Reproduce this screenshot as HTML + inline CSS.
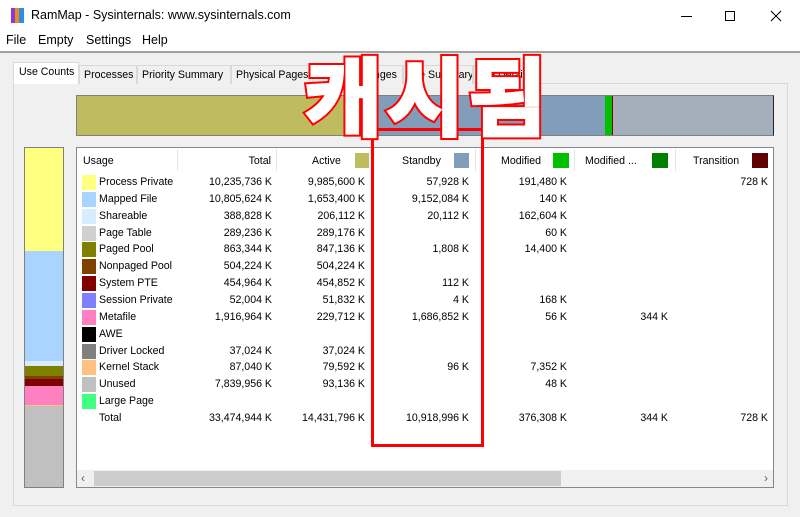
<!DOCTYPE html>
<html><head><meta charset="utf-8"><style>
*{margin:0;padding:0;box-sizing:border-box}
body{width:800px;height:517px;background:#f0f0f0;font-family:"Liberation Sans",Tahoma,sans-serif;font-size:10.6px;color:#000;position:relative;overflow:hidden}
.a{position:absolute}
.r{position:absolute;text-align:right;white-space:nowrap}
.t{position:absolute;white-space:nowrap}
.tab{position:absolute;top:65px;height:19px;border:1px solid #d9d9d9;border-bottom:none;background:#f0f0f0;font-size:10.6px;padding:3px 0 0 4px;color:#000;white-space:nowrap;overflow:hidden}
.sw{position:absolute;left:82px;width:14px;height:15px}
.big{position:absolute;left:304px;top:46px;font-family:'Noto Sans CJK KR','NanumGothic',sans-serif;font-weight:bold;font-size:85px;letter-spacing:4px;line-height:1.1;white-space:nowrap}
</style></head><body>
<div class="a" style="left:0;top:0;width:800px;height:51px;background:#fff"></div>
<div class="a" style="left:0;top:51px;width:800px;height:2px;background:#a0a0a0"></div>
<div class="a" style="left:11px;top:8px;width:4px;height:15px;background:#8a3ad8"></div>
<div class="a" style="left:15px;top:8px;width:4px;height:15px;background:#f08a1c"></div>
<div class="a" style="left:19px;top:8px;width:5px;height:15px;background:#2b8ee6"></div>
<div class="t" style="left:31px;top:8px;font-size:12.5px">RamMap - Sysinternals: www.sysinternals.com</div>
<div class="t" style="left:6px;top:33px;font-size:12.5px">File</div>
<div class="t" style="left:38px;top:33px;font-size:12.5px">Empty</div>
<div class="t" style="left:86px;top:33px;font-size:12.5px">Settings</div>
<div class="t" style="left:142px;top:33px;font-size:12.5px">Help</div>
<div class="a" style="left:681px;top:16px;width:11px;height:1px;background:#000"></div>
<div class="a" style="left:725px;top:11px;width:10px;height:10px;border:1px solid #000"></div>
<svg class="a" style="left:770px;top:10px" width="12" height="12"><path d="M1 1L11 11M11 1L1 11" stroke="#000" stroke-width="1.1"/></svg>

<div class="a" style="left:13px;top:83px;width:775px;height:423px;border:1px solid #d9d9d9;background:#f0f0f0"></div>
<div class="tab" style="left:79px;width:58px">Processes</div>
<div class="tab" style="left:137px;width:94px">Priority Summary</div>
<div class="tab" style="left:231px;width:82px">Physical Pages</div>
<div class="tab" style="left:313px;width:90px">Physical Ranges</div>
<div class="tab" style="left:403px;width:70px">File Summary</div>
<div class="tab" style="left:473px;width:60px">File Details</div>
<div class="tab" style="left:13px;top:62px;height:22px;width:66px;background:#fff;padding-left:5px">Use Counts</div>

<div class="a" style="left:76px;top:95px;width:698px;height:41px;border:1px solid #808080;border-right-color:#222;background:#a5afbb"></div>
<div class="a" style="left:77px;top:96px;width:300px;height:39px;background:#bfbc5f"></div>
<div class="a" style="left:377px;top:96px;width:228px;height:39px;background:#829dba"></div>
<div class="a" style="left:605px;top:96px;width:7px;height:39px;background:#00c000"></div>
<div class="a" style="left:612px;top:96px;width:1px;height:39px;background:#800000"></div>

<div class="a" style="left:24px;top:147px;width:40px;height:341px;border:1px solid #808080;background:#c0c0c0"></div>
<div class="a" style="left:25px;top:148px;width:38px;height:103px;background:#ffff80"></div>
<div class="a" style="left:25px;top:251px;width:38px;height:110px;background:#a8d4ff"></div>
<div class="a" style="left:25px;top:361px;width:38px;height:5px;background:#d8ecff"></div>
<div class="a" style="left:25px;top:366px;width:38px;height:10px;background:#808000"></div>
<div class="a" style="left:25px;top:376px;width:38px;height:3px;background:#804000"></div>
<div class="a" style="left:25px;top:379px;width:38px;height:7px;background:#800000"></div>
<div class="a" style="left:25px;top:386px;width:38px;height:19px;background:#ff80c0"></div>
<div class="a" style="left:25px;top:405px;width:38px;height:1px;background:#ffc080"></div>

<div class="a" style="left:76px;top:147px;width:698px;height:341px;border:1px solid #828790;background:#fff"></div>
<div class="a" style="left:177px;top:149px;width:1px;height:22px;background:#e5e5e5"></div>
<div class="a" style="left:276px;top:149px;width:1px;height:22px;background:#e5e5e5"></div>
<div class="a" style="left:475px;top:149px;width:1px;height:22px;background:#e5e5e5"></div>
<div class="a" style="left:574px;top:149px;width:1px;height:22px;background:#e5e5e5"></div>
<div class="a" style="left:675px;top:149px;width:1px;height:22px;background:#e5e5e5"></div>
<div class="t" style="left:83px;top:155px">Usage</div>
<div class="r" style="left:200px;width:71px;top:155px">Total</div>
<div class="t" style="left:312px;top:155px">Active</div>
<div class="a" style="left:355px;top:153px;width:14px;height:15px;background:#bfbc5f"></div>
<div class="t" style="left:402px;top:155px">Standby</div>
<div class="a" style="left:454px;top:153px;width:15px;height:15px;background:#829dba"></div>
<div class="t" style="left:501px;top:155px">Modified</div>
<div class="a" style="left:553px;top:153px;width:16px;height:15px;background:#00c000"></div>
<div class="t" style="left:585px;top:155px">Modified ...</div>
<div class="a" style="left:652px;top:153px;width:16px;height:15px;background:#008000"></div>
<div class="t" style="left:693px;top:155px">Transition</div>
<div class="a" style="left:752px;top:153px;width:16px;height:15px;background:#600000"></div>

<div id="rows"></div>
<script>
var rows=[
["#ffff80","Process Private","10,235,736 K","9,985,600 K","57,928 K","191,480 K","","728 K"],
["#a8d4ff","Mapped File","10,805,624 K","1,653,400 K","9,152,084 K","140 K","",""],
["#d8ecff","Shareable","388,828 K","206,112 K","20,112 K","162,604 K","",""],
["#d0d0d0","Page Table","289,236 K","289,176 K","","60 K","",""],
["#808000","Paged Pool","863,344 K","847,136 K","1,808 K","14,400 K","",""],
["#804000","Nonpaged Pool","504,224 K","504,224 K","","","",""],
["#800000","System PTE","454,964 K","454,852 K","112 K","","",""],
["#8080ff","Session Private","52,004 K","51,832 K","4 K","168 K","",""],
["#ff80c0","Metafile","1,916,964 K","229,712 K","1,686,852 K","56 K","344 K",""],
["#000000","AWE","","","","","",""],
["#808080","Driver Locked","37,024 K","37,024 K","","","",""],
["#ffc080","Kernel Stack","87,040 K","79,592 K","96 K","7,352 K","",""],
["#c0c0c0","Unused","7,839,956 K","93,136 K","","48 K","",""],
["#40ff80","Large Page","","","","","",""],
["","Total","33,474,944 K","14,431,796 K","10,918,996 K","376,308 K","344 K","728 K"]];
var R=[272,368,469,567,668,768],h="";
rows.forEach(function(r,i){var y=174+i*16.86;
if(r[0])h+='<div class="sw" style="top:'+(y+1)+'px;background:'+r[0]+'"></div>';
h+='<div class="t" style="left:99px;top:'+(y+2)+'px">'+r[1]+'</div>';
for(var c=0;c<6;c++){var clip=c==1?'overflow:hidden;':'';h+='<div class="r" style="'+clip+'left:'+(R[c]-95)+'px;width:'+(c==1?(365-(R[c]-95)):95)+'px;top:'+(y+2)+'px">'+r[c+2]+'</div>';}
});
document.getElementById('rows').innerHTML=h;
</script>

<div class="a" style="left:77px;top:470px;width:696px;height:17px;background:#f0f0f0"></div>
<div class="a" style="left:94px;top:471px;width:467px;height:15px;background:#cdcdcd"></div>
<div class="t" style="left:81px;top:471px;color:#606060;font-size:12px">‹</div>
<div class="t" style="left:764px;top:471px;color:#606060;font-size:12px">›</div>

<div class="a" style="left:371px;top:128px;width:113px;height:319px;border:3px solid #f00"></div>
<div class="big" style="color:#f00;-webkit-text-stroke:7px #f00">캐시됨</div>
<div class="big" style="color:#fff;-webkit-text-stroke:3px #fff">캐시됨</div>
</body></html>
